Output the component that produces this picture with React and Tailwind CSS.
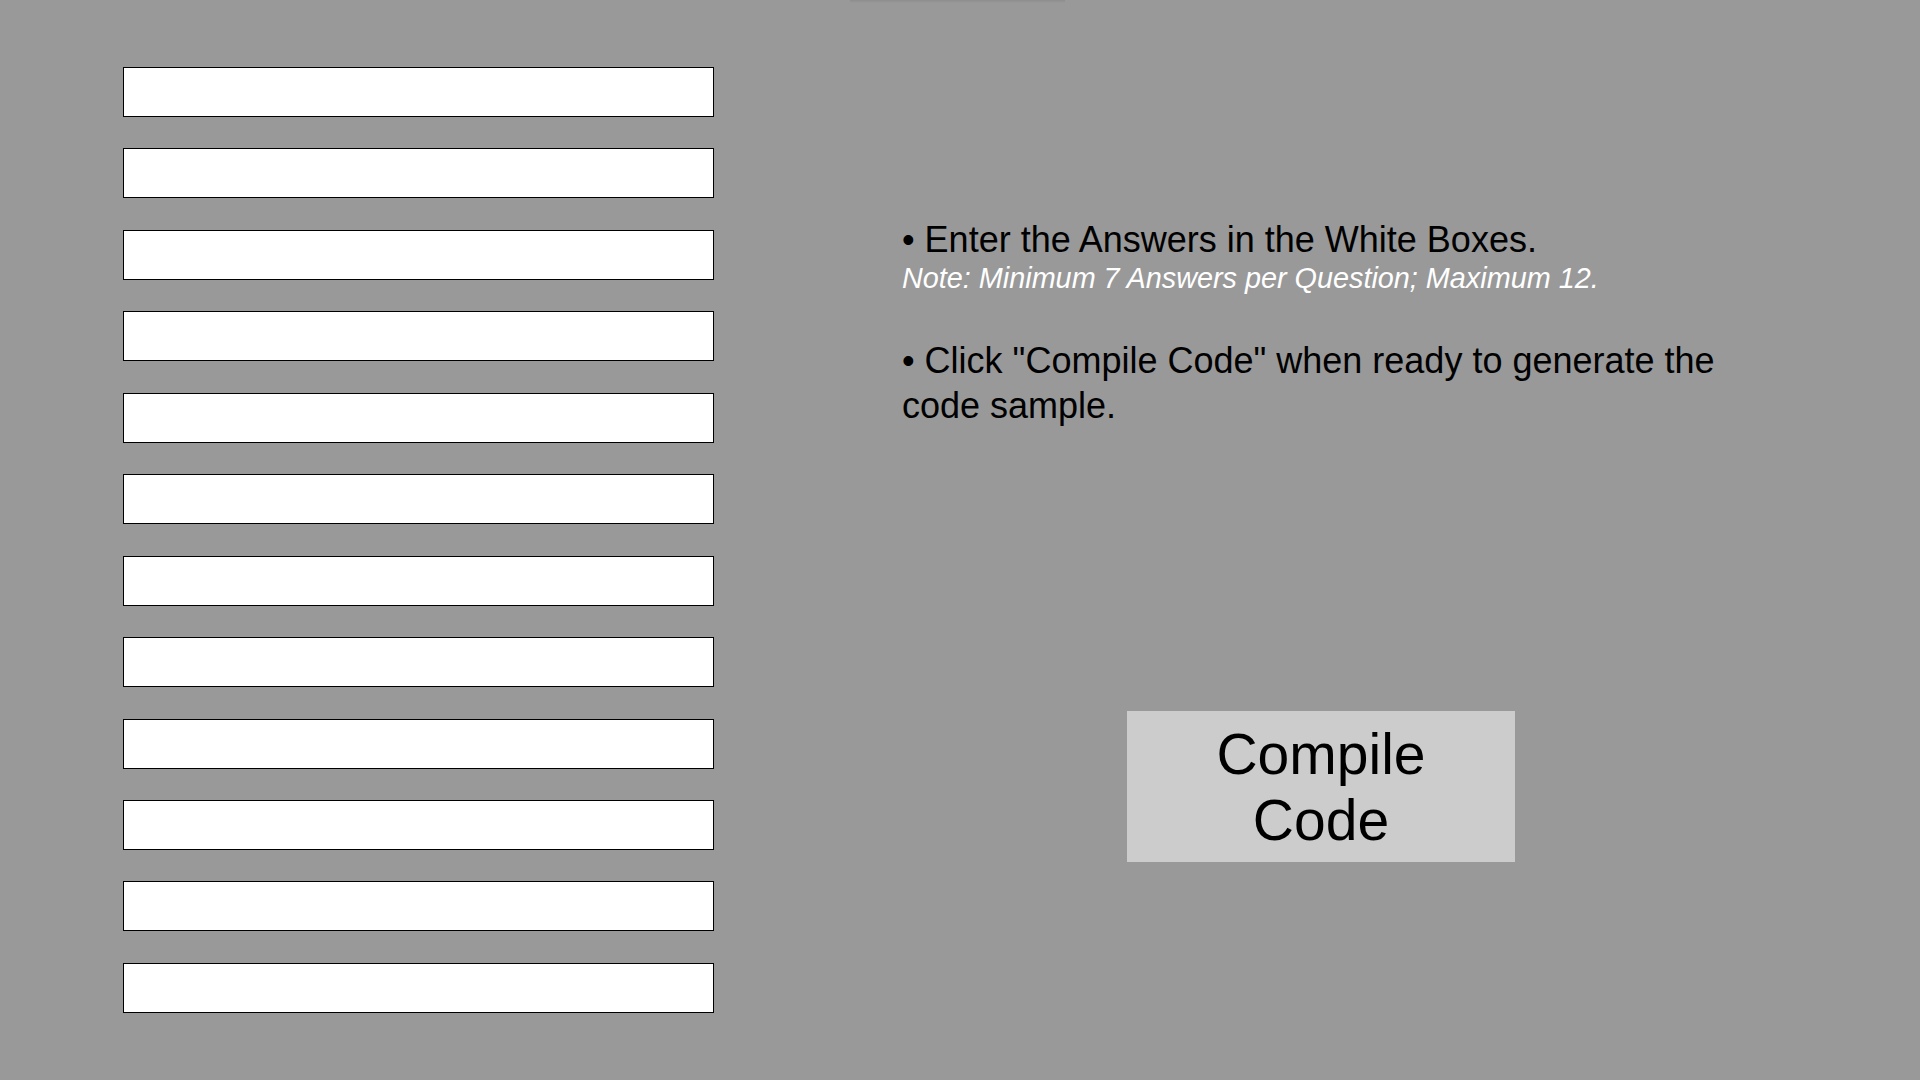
import React, { useState } from 'react';

const App = () => {
  const [answers, setAnswers] = useState(Array(12).fill(''));

  const handleChange = (index, value) => {
    const next = [...answers];
    next[index] = value;
    setAnswers(next);
  };

  return (
    <div className="min-h-screen w-full bg-[#999999] font-['Liberation_Sans',Arial,sans-serif] overflow-hidden">
      <div className="ml-[850px] w-[215px] h-[3px] bg-gradient-to-b from-[#8d8d8d] to-[#999999]" />

      <div className="flex pt-[64px]">
        <div className="ml-[123px] w-[591px] flex flex-col gap-[31.45px]">
          {answers.map((value, index) => (
            <input
              key={index}
              type="text"
              value={value}
              onChange={e => handleChange(index, e.target.value)}
              className="h-[50px] w-full bg-white border border-black outline-none px-2 text-[24px]"
            />
          ))}
        </div>

        <div className="ml-[188px] w-[860px] pt-[152px] flex flex-col">
          <p className="text-[36px] leading-[41px] text-black">
            • Enter the Answers in the White Boxes.
          </p>
          <p className="mt-[2px] text-[28.8px] leading-[33px] italic text-white">
            Note: Minimum 7 Answers per Question; Maximum 12.
          </p>
          <p className="mt-[43px] text-[36px] leading-[45px] text-black">
            • Click "Compile Code" when ready to generate the code sample.
          </p>

          <button
            type="button"
            className="mt-[283px] ml-[225px] w-[388px] h-[151px] bg-[#cccccc] text-black text-[57px] leading-[66px] pt-[10px] pb-[9px] px-[20px] flex flex-col items-center"
          >
            <span>Compile</span>
            <span>Code</span>
          </button>
        </div>
      </div>
    </div>
  );
};

export default App;
